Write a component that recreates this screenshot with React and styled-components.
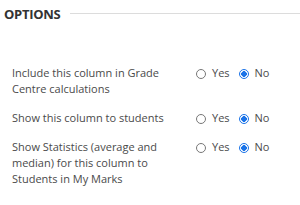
import React from 'react'
import styled, { createGlobalStyle } from 'styled-components'

const GlobalStyle = createGlobalStyle`
  body {
    margin: 0;
    background: #fff;
    font-family: "Open Sans", "Liberation Sans", sans-serif;
  }
`

const options = [
  { label: 'Include this column in Grade Centre calculations', value: 'no' },
  { label: 'Show this column to students', value: 'no' },
  { label: 'Show Statistics (average and median) for this column to Students in My Marks', value: 'no' },
]

const Radio = ({ checked, text }) => (
  <Choice>
    <Dot checked={checked} />
    <span>{text}</span>
  </Choice>
)

const App = () => {
  return (
    <Wrapper>
      <GlobalStyle />
      <Header>
        <Title>OPTIONS</Title>
        <Rule />
      </Header>
      <List>
        {options.map((o, i) => (
          <Row key={i}>
            <Label>{o.label}</Label>
            <Group>
              <Radio checked={o.value === 'yes'} text="Yes" />
              <Radio checked={o.value === 'no'} text="No" />
            </Group>
          </Row>
        ))}
      </List>
    </Wrapper>
  )
}
export default App

const Wrapper = styled.div`
  width: 300px;
  height: 205px;
  padding-top: 4px;
  box-sizing: border-box;
  overflow: hidden;
`

const Header = styled.div`
  display: flex;
  align-items: center;
  height: 20px;
  padding-left: 4px;
`

const Title = styled.div`
  font-size: 13px;
  font-weight: 700;
  color: #333;
  letter-spacing: -0.3px;
`

const Rule = styled.div`
  flex: 1;
  height: 1px;
  margin-left: 10px;
  margin-top: -2px;
  background: #dcdcdc;
`

const List = styled.div`
  display: flex;
  flex-direction: column;
  gap: 13px;
  margin-top: 41px;
  padding-left: 12px;
`

const Row = styled.div`
  display: flex;
  align-items: flex-start;
`

const Label = styled.div`
  width: 172px;
  font-size: 11px;
  line-height: 16px;
  color: #4a4a4a;
`

const Group = styled.div`
  display: flex;
  margin-left: 12px;
  gap: 9px;
  font-size: 11px;
  line-height: 16px;
  color: #4a4a4a;
`

const Choice = styled.div`
  display: flex;
  align-items: center;
  gap: 6px;
`

const Dot = styled.span`
  width: 10px;
  height: 10px;
  box-sizing: border-box;
  border-radius: 50%;
  margin-top: 2px;
  border: 1px solid ${p => (p.checked ? '#1a73e8' : '#777')};
  background: ${p => (p.checked ? 'radial-gradient(circle, #1a73e8 0 2.6px, #fff 3px)' : '#fff')};
`
